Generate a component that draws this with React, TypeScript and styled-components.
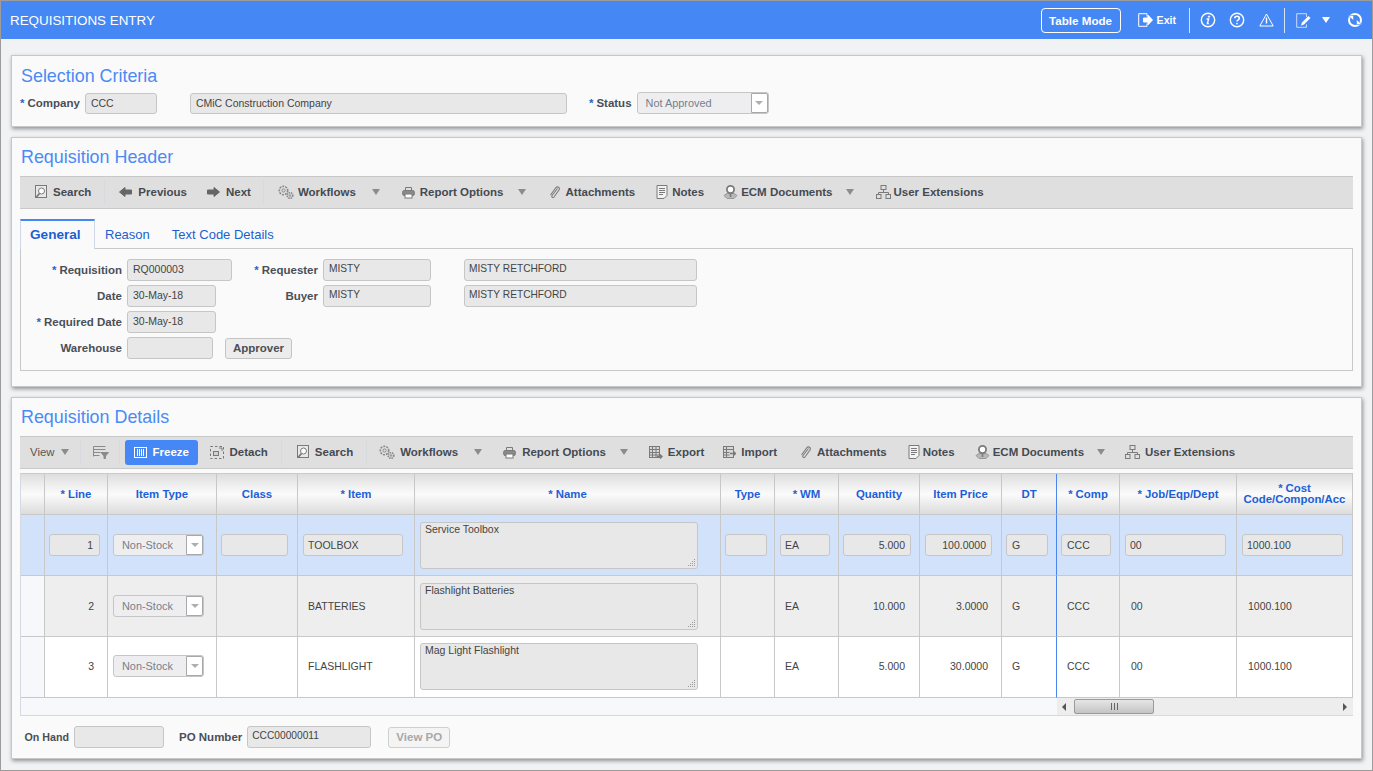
import { ReactNode } from 'react';
import styled, { createGlobalStyle } from 'styled-components';

const GlobalStyle = createGlobalStyle`
  html, body {
    margin: 0;
    padding: 0;
    height: 100%;
    overflow: hidden;
    background: #f1f2f4;
  }
  body {
    font-family: 'Liberation Sans', Arial, sans-serif;
    font-size: 10.5px;
    color: #3a3f47;
  }
`;

const Page = styled.div`
  box-sizing: border-box;
  width: 1373px;
  height: 771px;
  border: 1px solid #9c9c9c;
  background: #f1f2f4;
  display: flex;
  flex-direction: column;
  overflow: hidden;
`;

const TopBar = styled.header`
  flex: none;
  height: 38px;
  background: #4588f5;
  color: #fff;
  display: flex;
  align-items: center;
  padding: 0 9px;
`;

const AppTitle = styled.div`
  font-size: 13.4px;
  padding-top: 1px;
  flex: 1;
`;

const TableModeButton = styled.button`
  flex: none;
  font: bold 11.6px 'Liberation Sans', Arial, sans-serif;
  color: #fff;
  background: transparent;
  border: 1px solid #fff;
  border-radius: 4px;
  width: 80px;
  height: 25px;
  padding: 0;
  margin-right: 17px;
`;

const ExitLink = styled.div`
  display: flex;
  align-items: center;
  gap: 4px;
  font-weight: bold;
  font-size: 10.6px;
  margin-right: 13px;
`;

const BarRule = styled.div<{ $ml?: number }>`
  width: 1px;
  height: 25px;
  margin-left: ${(p) => p.$ml ?? 0}px;
  background: #d5e3fb;
`;

const BarIcon = styled.span<{ $ml: number }>`
  display: flex;
  margin-left: ${(p) => p.$ml}px;
`;

const Content = styled.main`
  flex: 1;
  display: flex;
  flex-direction: column;
  gap: 10px;
  padding: 16px 10px 0;
`;

const Panel = styled.section<{ $h: number }>`
  box-sizing: border-box;
  height: ${(p) => p.$h}px;
  background: #fafafa;
  border: 1px solid #c8c8c8;
  box-shadow: 1px 2px 4px rgba(0, 0, 0, 0.4);
  padding: 0 8px;
`;

const PanelTitle = styled.h2`
  margin: 0;
  padding-left: 1px;
  font-size: 17.9px;
  font-weight: normal;
  color: #4a8af4;
  height: 20px;
  line-height: 20px;
`;

const CriteriaTitle = styled(PanelTitle)`
  margin-top: 10px;
`;

const SectionTitle = styled(PanelTitle)`
  margin-top: 9px;
  margin-bottom: 9px;
`;

const Row = styled.div<{ $mt?: number }>`
  display: flex;
  align-items: center;
  margin-top: ${(p) => p.$mt ?? 0}px;
`;

const Label = styled.label<{ $w?: number; $ml?: number; $fs?: number }>`
  flex: none;
  box-sizing: border-box;
  width: ${(p) => (p.$w ? `${p.$w}px` : 'auto')};
  margin-left: ${(p) => p.$ml ?? 0}px;
  margin-right: 5px;
  text-align: right;
  font-weight: bold;
  font-size: ${(p) => p.$fs ?? 11.5}px;
  color: #4a4f57;
  white-space: nowrap;
`;

const Star = styled.span`
  color: #2a62c8;
  margin-right: 3px;
`;

const Field = styled.div<{ $w: number; $h?: number; $ml?: number; $right?: boolean; $pl?: number; $pr?: number; $fs?: number }>`
  flex: none;
  box-sizing: border-box;
  width: ${(p) => p.$w}px;
  height: ${(p) => p.$h ?? 22}px;
  margin-left: ${(p) => p.$ml ?? 0}px;
  background: #e8e8e8;
  border: 1px solid #c6c6c6;
  border-radius: 3px;
  padding: 0 ${(p) => p.$pr ?? 5}px 1px ${(p) => p.$pl ?? 5}px;
  display: flex;
  align-items: center;
  justify-content: ${(p) => (p.$right ? 'flex-end' : 'flex-start')};
  font-size: ${(p) => p.$fs ?? 10.5}px;
  color: #444;
  white-space: nowrap;
`;

const FormField = styled(Field)`
  padding-bottom: 3px;
`;

const SelectBox = styled.div<{ $w: number; $ml?: number }>`
  flex: none;
  box-sizing: border-box;
  width: ${(p) => p.$w}px;
  height: 22px;
  margin-left: ${(p) => p.$ml ?? 0}px;
  background: #eeeef0;
  border: 1px solid #c6c6c6;
  border-radius: 3px;
  padding-left: 8px;
  position: relative;
  display: flex;
  align-items: center;
  font-size: 10.9px;
  color: #76808c;
`;

const SelectArrow = styled.span`
  position: absolute;
  top: 0;
  right: 0;
  width: 17px;
  height: 20px;
  box-sizing: border-box;
  background: #fff;
  border: 1px solid #a8a8a8;
  border-radius: 0 2px 2px 0;
  display: flex;
  align-items: center;
  justify-content: center;
  &::after {
    content: '';
    border-left: 4px solid transparent;
    border-right: 4px solid transparent;
    border-top: 4px solid #aeaeae;
  }
`;

const Toolbar = styled.div`
  height: 33px;
  box-sizing: border-box;
  background: #dfdfdf;
  border-top: 1px solid #c8c8c8;
  border-bottom: 1px solid #c8c8c8;
  padding-bottom: 1px;
  display: flex;
  align-items: center;
`;

const ToolItem = styled.div<{ $ml: number; $gap?: number; $plain?: boolean }>`
  flex: none;
  display: flex;
  align-items: center;
  gap: ${(p) => p.$gap ?? 5}px;
  margin-left: ${(p) => p.$ml}px;
  font-weight: ${(p) => (p.$plain ? 'normal' : 'bold')};
  font-size: ${(p) => (p.$plain ? 11.4 : 11.5)}px;
  color: ${(p) => (p.$plain ? '#555' : '#454a52')};
  white-space: nowrap;
`;

const FreezeButton = styled(ToolItem)`
  box-sizing: border-box;
  width: 73px;
  height: 25px;
  padding-left: 9px;
  background: #4588f5;
  border-radius: 3px;
  color: #fff;
`;

const ToolSep = styled.span<{ $ml: number }>`
  flex: none;
  width: 1px;
  height: 26px;
  margin-left: ${(p) => p.$ml}px;
  background: #d7dbe0;
`;

const Caret = styled.span<{ $ml: number }>`
  flex: none;
  margin-left: ${(p) => p.$ml}px;
  border-left: 4.5px solid transparent;
  border-right: 4.5px solid transparent;
  border-top: 6px solid #8c8c8c;
`;

const WhiteCaret = styled(Caret)`
  border-top-color: #fff;
`;

const TabStrip = styled.div`
  display: flex;
  height: 29px;
  margin-top: 10px;
  font-size: 13px;
`;

const Tab = styled.div<{ $active?: boolean; $ml?: number }>`
  box-sizing: border-box;
  display: flex;
  align-items: center;
  margin-left: ${(p) => p.$ml ?? 0}px;
  color: #1c5fd0;
  padding-top: 1px;
  ${(p) =>
    p.$active
      ? `
    width: 75px;
    padding: 0 0 2px 9px;
    font-size: 13.6px;
    font-weight: bold;
    background: #fafafa;
    border-top: 2px solid #4588f5;
    border-left: 1px solid #cfd8e6;
    border-right: 1px solid #cfd8e6;
    margin-bottom: -1px;
    position: relative;
    z-index: 1;
  `
      : ''}
`;

const TabBody = styled.div`
  box-sizing: border-box;
  height: 123px;
  border: 1px solid #c8c8c8;
  display: flex;
  padding-top: 10px;
`;

const FormColumn = styled.div<{ $w: number }>`
  flex: none;
  width: ${(p) => p.$w}px;
  display: flex;
  flex-direction: column;
  gap: 4px;
`;

const SmallButton = styled.button<{ $disabled?: boolean }>`
  flex: none;
  box-sizing: border-box;
  height: 21px;
  border: 1px solid ${(p) => (p.$disabled ? '#cfcfcf' : '#c4c4c4')};
  border-radius: 3px;
  background: ${(p) => (p.$disabled ? '#f4f4f4' : '#ececec')};
  color: ${(p) => (p.$disabled ? '#a8a8a8' : '#4a4f57')};
  font: bold 11.5px 'Liberation Sans', Arial, sans-serif;
  padding: 0;
`;

const ApproverButton = styled(SmallButton)`
  width: 67px;
  margin-left: 12px;
`;

const ViewPoButton = styled(SmallButton)`
  width: 62px;
  margin-left: 17px;
`;

const GridWrap = styled.div`
  margin-top: 4px;
  width: 1333px;
`;

const Grid = styled.table`
  border-collapse: separate;
  border-spacing: 0;
  table-layout: fixed;
  width: 1333px;
  border-top: 1px solid #cacaca;
  border-left: 1px solid #d4dae4;
`;

const Th = styled.th<{ $blue?: boolean }>`
  box-sizing: border-box;
  height: 41px;
  padding: 0 2px;
  background: linear-gradient(#dedede 0%, #fbfbfb 50%, #dcdcdc 100%);
  color: #1c5fd8;
  font-weight: bold;
  font-size: 11.4px;
  line-height: 11px;
  border-right: 1px solid ${(p) => (p.$blue ? '#4a86ee' : '#c8c8c8')};
  border-bottom: 1px solid #c8c8c8;
`;

const Td = styled.td<{ $bg: string; $blue?: boolean; $right?: boolean; $pl?: number; $pr?: number; $pb?: number }>`
  box-sizing: border-box;
  height: 61px;
  padding: 0 ${(p) => p.$pr ?? 0}px ${(p) => p.$pb ?? 0}px ${(p) => p.$pl ?? 0}px;
  background: ${(p) => p.$bg};
  border-right: 1px solid ${(p) => (p.$blue ? '#4a86ee' : '#c8c8c8')};
  border-bottom: 1px solid #c8c8c8;
  font-size: 10.5px;
  color: #444;
  text-align: ${(p) => (p.$right ? 'right' : 'left')};
  white-space: nowrap;
`;

const NameBox = styled.div`
  box-sizing: border-box;
  width: 278px;
  height: 47px;
  margin-left: 5px;
  background: #e8e8e8;
  border: 1px solid #c6c6c6;
  border-radius: 3px;
  padding: 0 4px;
  font-size: 10.5px;
  color: #444;
  line-height: 12px;
  position: relative;
`;

const Grip = styled.svg`
  position: absolute;
  right: 1px;
  bottom: 1px;
`;

const ScrollRow = styled.div`
  box-sizing: border-box;
  height: 18px;
  display: flex;
  border-bottom: 1px solid #d4dae4;
  border-left: 1px solid #d4dae4;
`;

const FrozenScroll = styled.div`
  flex: none;
  width: 1036px;
  background: #f6f8fc;
`;

const ScrollTrack = styled.div`
  flex: 1;
  background: #ededed;
  display: flex;
  align-items: center;
  justify-content: space-between;
  padding: 0 6px 0 5px;
  position: relative;
`;

const ScrollThumb = styled.div`
  position: absolute;
  left: 17px;
  top: 1px;
  width: 80px;
  height: 15px;
  box-sizing: border-box;
  border: 1px solid #9a9a9a;
  border-radius: 2px;
  background: linear-gradient(#e6e6e6, #c4c4c4);
  display: flex;
  align-items: center;
  justify-content: center;
  gap: 2px;
`;

const ThumbLine = styled.i`
  width: 1px;
  height: 7px;
  background: #666;
`;

const ScrollArrow = styled.span<{ $dir: 'left' | 'right' }>`
  border-top: 4px solid transparent;
  border-bottom: 4px solid transparent;
  ${(p) =>
    p.$dir === 'left' ? 'border-right: 4px solid #555;' : 'border-left: 4px solid #555;'}
`;

const FooterRow = styled(Row)`
  margin-top: 10px;
`;

// toolbar and title bar drawings

function Ico({ w = 14, h = 14, color = '#7a7a7a', fill = 'none', children }: { w?: number; h?: number; color?: string; fill?: string; children: ReactNode }) {
  return (
    <svg width={w} height={h} viewBox={`0 0 ${w} ${h}`} fill={fill} stroke={color} strokeWidth="1" style={{ flex: 'none', display: 'block' }}>
      {children}
    </svg>
  );
}

const SearchIcon = () => (
  <Ico>
    <rect x="1.5" y="0.5" width="11" height="12" fill="#e8e8e8" />
    <circle cx="7.5" cy="6" r="3" fill="#fff" />
    <path d="M5.5 8.5 2 12.5" strokeWidth="1.8" />
  </Ico>
);

const ArrowLeftIcon = () => (
  <Ico w={13} h={12} color="#666" fill="#666">
    <path d="M0.5 6 6 1.5V4h6.5v4H6v2.5z" />
  </Ico>
);

const ArrowRightIcon = () => (
  <Ico w={13} h={12} color="#666" fill="#666">
    <path d="M12.5 6 7 1.5V4H0.5v4H7v2.5z" />
  </Ico>
);

const GearsIcon = () => (
  <Ico w={16} h={14} color="#8a8a8a">
    <circle cx="5.5" cy="5.5" r="4.2" strokeWidth="1.6" strokeDasharray="2 1" />
    <circle cx="5.5" cy="5.5" r="1.6" />
    <circle cx="12" cy="10.5" r="2.8" strokeWidth="1.6" strokeDasharray="1.5 0.8" />
    <circle cx="12" cy="10.5" r="0.8" />
  </Ico>
);

const PrintIcon = () => (
  <Ico w={13} h={13}>
    <path d="M3.5 4.5v-3h6v3" />
    <rect x="0.7" y="4.5" width="11.6" height="5" rx="1.5" fill="#8a8a8a" />
    <rect x="3" y="8" width="7" height="4" fill="#fff" />
  </Ico>
);

const ClipIcon = () => (
  <Ico w={13} h={14}>
    <path d="M9.5 3.5 4 10.5c-1 1.3 1 2.8 2 1.5l5-7c1.6-2.2-1.6-4.4-3.2-2.2L2.5 10" strokeWidth="1.1" />
  </Ico>
);

const NotesIcon = () => (
  <Ico w={12} h={14}>
    <path d="M1 .5h10v10l-3 3H1z" fill="#f2f2f2" />
    <path d="M3 3.5h6M3 5.5h6M3 7.5h6M3 9.5h4" />
  </Ico>
);

const EcmIcon = () => (
  <Ico w={15} h={14}>
    <path d="M1 10.5 4 8.5h7l3 2-3 3H4z" fill="#b8b8b8" stroke="#999" />
    <circle cx="7.5" cy="4.5" r="3.6" fill="#fff" strokeWidth="1.8" />
    <path d="M7.5 8v4" strokeWidth="1.6" />
  </Ico>
);

const TreeIcon = () => (
  <Ico w={15} h={14}>
    <rect x="5" y="0.5" width="5" height="4" />
    <path d="M7.5 4.5v3M2.5 9.5v-2h10v2" />
    <rect x="0.5" y="9.5" width="4.5" height="4" />
    <rect x="10" y="9.5" width="4.5" height="4" />
  </Ico>
);

const FilterIcon = () => (
  <Ico w={16} h={13} color="#8a8a8a">
    <path d="M.5 .5h12M.5 3.5h12M.5 6.5h7M.5 9.5h6M.5 .5v10" />
    <path d="M8 6.5h7.5L12.5 10v2.5l-1.5 .3V10z" fill="#8a8a8a" />
  </Ico>
);

const FreezeIcon = () => (
  <Ico w={13} h={11} color="#fff">
    <rect x="0.5" y="0.5" width="12" height="10" />
    <path d="M3.5 2v7M5.5 2v7M7.5 2v7M9.5 2v7" />
  </Ico>
);

const DetachIcon = () => (
  <Ico w={14} h={13}>
    <rect x="0.5" y="0.5" width="13" height="12" strokeDasharray="2.5 2" />
    <rect x="3.5" y="5.5" width="5" height="4" fill="#d0d0d0" />
    <path d="M9 2h3v3" />
  </Ico>
);

const ExportIcon = () => (
  <Ico w={14} h={13}>
    <rect x="0.5" y="0.5" width="10" height="11" fill="#d8d8d8" />
    <path d="M0.5 3.5h10M3.5 .5v11M7 .5v11M.5 6.5h10M.5 9h10" />
    <path d="M8 10.5h5M11 8.5l2 2-2 2" strokeWidth="1.4" />
  </Ico>
);

const ImportIcon = () => (
  <Ico w={13} h={13}>
    <rect x="0.5" y="0.5" width="10" height="11" fill="#d8d8d8" />
    <path d="M0.5 3.5h10M3.5 .5v11M.5 6.5h6M.5 9h6" />
    <path d="M7 7.5h5.5M10.5 5.5l2 2-2 2" strokeWidth="1.4" />
  </Ico>
);

const ExitIcon = () => (
  <Ico w={15} h={14} color="#fff">
    <path d="M9 3.5V.7H.7v12.6H9v-2.8" />
    <path d="M5.5 5H10V2.2L14.5 7 10 11.8V9H5.5z" fill="#fff" />
  </Ico>
);

const InfoIcon = () => (
  <Ico w={16} h={16} color="#fff">
    <circle cx="8" cy="8" r="6.7" strokeWidth="1.4" />
    <path d="M6.6 7h2L7.4 11.6h1.5" strokeWidth="1.4" />
    <circle cx="9" cy="4.6" r="0.7" fill="#fff" />
  </Ico>
);

const HelpIcon = () => (
  <Ico w={16} h={16} color="#fff">
    <circle cx="8" cy="8" r="6.7" strokeWidth="1.4" />
    <path d="M5.8 6.2C5.8 3.6 10.3 3.6 10.3 6.2 10.3 7.9 8 7.7 8 9.6" strokeWidth="1.6" />
    <circle cx="8" cy="11.6" r="0.9" fill="#fff" stroke="none" />
  </Ico>
);

const WarnIcon = () => (
  <Ico w={15} h={14} color="#fff">
    <path d="M7.5 1 14.2 13H.8z" />
    <path d="M7.5 4.5V10.5" strokeWidth="1.4" />
  </Ico>
);

const EditIcon = () => (
  <Ico w={15} h={15} color="#fff">
    <path d="M10.5 4V.7H.7v13.6h9.8v-3" stroke="#c7dafc" />
    <path d="M5 12.5 6 9.5 12.5 3l2 2L8 11.5z" fill="#fff" stroke="none" />
  </Ico>
);

const RefreshIcon = () => (
  <Ico w={16} h={16} color="#fff">
    <circle cx="8" cy="8" r="6" strokeWidth="2" />
    <path d="M1 3.5h5.5v5zM15 12.5H9.5v-5z" fill="#fff" stroke="#4588f5" strokeWidth="0.6" />
  </Ico>
);

const Req = () => <Star>*</Star>;

function GripMark() {
  return (
    <Grip width="9" height="9" viewBox="0 0 9 9" fill="#9a9a9a">
      <rect x="7" y="1" width="1" height="1" />
      <rect x="5" y="3" width="1" height="1" />
      <rect x="7" y="3" width="1" height="1" />
      <rect x="3" y="5" width="1" height="1" />
      <rect x="5" y="5" width="1" height="1" />
      <rect x="7" y="5" width="1" height="1" />
      <rect x="1" y="7" width="1" height="1" />
      <rect x="3" y="7" width="1" height="1" />
      <rect x="5" y="7" width="1" height="1" />
      <rect x="7" y="7" width="1" height="1" />
    </Grip>
  );
}

const colWidths = [24, 63, 109, 81, 117, 306, 54, 64, 81, 82, 55, 63, 117, 116];

const headers: { text: ReactNode; blue?: boolean }[] = [
  { text: '' },
  { text: <><Req />Line</> },
  { text: 'Item Type' },
  { text: 'Class' },
  { text: <><Req />Item</> },
  { text: <><Req />Name</> },
  { text: 'Type' },
  { text: <><Req />WM</> },
  { text: 'Quantity' },
  { text: 'Item Price' },
  { text: 'DT', blue: true },
  { text: <><Req />Comp</> },
  { text: <><Req />Job/Eqp/Dept</> },
  { text: <><Req />Cost<br />Code/Compon/Acc</> },
];

const rows = [
  { line: '2', item: 'BATTERIES', name: 'Flashlight Batteries', qty: '10.000', price: '3.0000', bg: '#eeeeee', pb: 0 },
  { line: '3', item: 'FLASHLIGHT', name: 'Mag Light Flashlight', qty: '5.000', price: '30.0000', bg: '#ffffff', pb: 2 },
];

const selBg = '#d2e2fb';
const gutterBg = '#f6f8fc';

export default function App() {
  return (
    <Page>
      <GlobalStyle />
      <TopBar>
        <AppTitle>REQUISITIONS ENTRY</AppTitle>
        <TableModeButton>Table Mode</TableModeButton>
        <ExitLink><ExitIcon />Exit</ExitLink>
        <BarRule />
        <BarIcon $ml={10}><InfoIcon /></BarIcon>
        <BarIcon $ml={13}><HelpIcon /></BarIcon>
        <BarIcon $ml={14}><WarnIcon /></BarIcon>
        <BarRule $ml={10} />
        <BarIcon $ml={11}><EditIcon /></BarIcon>
        <WhiteCaret $ml={11} />
        <BarIcon $ml={17}><RefreshIcon /></BarIcon>
      </TopBar>

      <Content>
        <Panel $h={72}>
          <CriteriaTitle>Selection Criteria</CriteriaTitle>
          <Row $mt={6}>
            <Label><Req />Company</Label>
            <Field $w={72} $h={21}>CCC</Field>
            <Field $w={377} $h={21} $ml={33}>CMiC Construction Company</Field>
            <Label $ml={22}><Req />Status</Label>
            <SelectBox $w={132}>Not Approved<SelectArrow /></SelectBox>
          </Row>
        </Panel>

        <Panel $h={250}>
          <SectionTitle>Requisition Header</SectionTitle>
          <Toolbar>
            <ToolItem $ml={14}><SearchIcon />Search</ToolItem>
            <ToolSep $ml={13} />
            <ToolItem $ml={14} $gap={6}><ArrowLeftIcon />Previous</ToolItem>
            <ToolItem $ml={20} $gap={6}><ArrowRightIcon />Next</ToolItem>
            <ToolSep $ml={12} />
            <ToolItem $ml={14} $gap={4}><GearsIcon />Workflows</ToolItem>
            <Caret $ml={16} />
            <ToolItem $ml={22} $gap={5}><PrintIcon />Report Options</ToolItem>
            <Caret $ml={14} />
            <ToolItem $ml={22} $gap={5}><ClipIcon />Attachments</ToolItem>
            <ToolItem $ml={21} $gap={4}><NotesIcon />Notes</ToolItem>
            <ToolItem $ml={19} $gap={3}><EcmIcon />ECM Documents</ToolItem>
            <Caret $ml={13} />
            <ToolItem $ml={22} $gap={3}><TreeIcon />User Extensions</ToolItem>
          </Toolbar>
          <TabStrip>
            <Tab $active>General</Tab>
            <Tab $ml={10}>Reason</Tab>
            <Tab $ml={22}>Text Code Details</Tab>
          </TabStrip>
          <TabBody>
            <FormColumn $w={217}>
              <Row><Label $w={101}><Req />Requisition</Label><FormField $w={105}>RQ000003</FormField></Row>
              <Row><Label $w={101}>Date</Label><FormField $w={89}>30-May-18</FormField></Row>
              <Row><Label $w={101}><Req />Required Date</Label><FormField $w={89}>30-May-18</FormField></Row>
              <Row><Label $w={101}>Warehouse</Label><Field $w={86} /><ApproverButton>Approver</ApproverButton></Row>
            </FormColumn>
            <FormColumn $w={470}>
              <Row><Label $w={80}><Req />Requester</Label><FormField $w={108} $fs={10.2}>MISTY</FormField><FormField $w={233} $ml={33} $pl={4} $fs={10.2}>MISTY RETCHFORD</FormField></Row>
              <Row><Label $w={80}>Buyer</Label><FormField $w={108} $fs={10.2}>MISTY</FormField><FormField $w={233} $ml={33} $pl={4} $fs={10.2}>MISTY RETCHFORD</FormField></Row>
            </FormColumn>
          </TabBody>
        </Panel>

        <Panel $h={362}>
          <SectionTitle>Requisition Details</SectionTitle>
          <Toolbar>
            <ToolItem $ml={10} $plain>View</ToolItem>
            <Caret $ml={7} />
            <ToolSep $ml={11} />
            <ToolItem $ml={12}><FilterIcon /></ToolItem>
            <ToolSep $ml={10} />
            <FreezeButton $ml={5}><FreezeIcon />Freeze</FreezeButton>
            <ToolItem $ml={12}><DetachIcon />Detach</ToolItem>
            <ToolSep $ml={13} />
            <ToolItem $ml={14}><SearchIcon />Search</ToolItem>
            <ToolSep $ml={13} />
            <ToolItem $ml={12}><GearsIcon />Workflows</ToolItem>
            <Caret $ml={16} />
            <ToolItem $ml={21} $gap={6}><PrintIcon />Report Options</ToolItem>
            <Caret $ml={14} />
            <ToolItem $ml={21}><ExportIcon />Export</ToolItem>
            <ToolItem $ml={19}><ImportIcon />Import</ToolItem>
            <ToolItem $ml={22} $gap={5}><ClipIcon />Attachments</ToolItem>
            <ToolItem $ml={21} $gap={3}><NotesIcon />Notes</ToolItem>
            <ToolItem $ml={20} $gap={3}><EcmIcon />ECM Documents</ToolItem>
            <Caret $ml={13} />
            <ToolItem $ml={20} $gap={5}><TreeIcon />User Extensions</ToolItem>
          </Toolbar>
          <GridWrap>
            <Grid>
              <colgroup>
                {colWidths.map((w, i) => <col key={i} style={{ width: w }} />)}
              </colgroup>
              <thead>
                <tr>
                  {headers.map((h, i) => <Th key={i} $blue={h.blue}>{h.text}</Th>)}
                </tr>
              </thead>
              <tbody>
                <tr>
                  <Td $bg={selBg} />
                  <Td $bg={selBg} $pl={4}><Field $w={51} $right $pr={6}>1</Field></Td>
                  <Td $bg={selBg} $pl={5}><SelectBox $w={91}>Non-Stock<SelectArrow /></SelectBox></Td>
                  <Td $bg={selBg} $pl={4}><Field $w={67} /></Td>
                  <Td $bg={selBg} $pl={5}><Field $w={100} $pl={4}>TOOLBOX</Field></Td>
                  <Td $bg={selBg}><NameBox>Service Toolbox<GripMark /></NameBox></Td>
                  <Td $bg={selBg} $pl={4}><Field $w={42} /></Td>
                  <Td $bg={selBg} $pl={5}><Field $w={50} $pl={4}>EA</Field></Td>
                  <Td $bg={selBg} $pl={4}><Field $w={68} $right>5.000</Field></Td>
                  <Td $bg={selBg} $pl={5}><Field $w={67} $right>100.0000</Field></Td>
                  <Td $bg={selBg} $pl={4} $blue><Field $w={42}>G</Field></Td>
                  <Td $bg={selBg} $pl={4}><Field $w={50}>CCC</Field></Td>
                  <Td $bg={selBg} $pl={5}><Field $w={101} $pl={4}>00</Field></Td>
                  <Td $bg={selBg} $pl={5}><Field $w={101} $pl={4}>1000.100</Field></Td>
                </tr>
                {rows.map((r) => (
                  <tr key={r.line}>
                    <Td $bg={gutterBg} />
                    <Td $bg={r.bg} $pb={r.pb} $right $pr={13}>{r.line}</Td>
                    <Td $bg={r.bg} $pb={r.pb} $pl={5}><SelectBox $w={91}>Non-Stock<SelectArrow /></SelectBox></Td>
                    <Td $bg={r.bg} />
                    <Td $bg={r.bg} $pb={r.pb} $pl={10}>{r.item}</Td>
                    <Td $bg={r.bg} $pb={r.pb}><NameBox>{r.name}<GripMark /></NameBox></Td>
                    <Td $bg={r.bg} />
                    <Td $bg={r.bg} $pb={r.pb} $pl={10}>EA</Td>
                    <Td $bg={r.bg} $pb={r.pb} $right $pr={14}>{r.qty}</Td>
                    <Td $bg={r.bg} $pb={r.pb} $right $pr={13}>{r.price}</Td>
                    <Td $bg={r.bg} $pb={r.pb} $pl={10} $blue>G</Td>
                    <Td $bg={r.bg} $pb={r.pb} $pl={10}>CCC</Td>
                    <Td $bg={r.bg} $pb={r.pb} $pl={11}>00</Td>
                    <Td $bg={r.bg} $pb={r.pb} $pl={11}>1000.100</Td>
                  </tr>
                ))}
              </tbody>
            </Grid>
            <ScrollRow>
              <FrozenScroll />
              <ScrollTrack>
                <ScrollArrow $dir="left" />
                <ScrollThumb><ThumbLine /><ThumbLine /><ThumbLine /></ScrollThumb>
                <ScrollArrow $dir="right" />
              </ScrollTrack>
            </ScrollRow>
          </GridWrap>
          <FooterRow>
            <Label $ml={4} $w={45} $fs={10.7}>On Hand</Label>
            <Field $w={90} />
            <Label $ml={15}>PO Number</Label>
            <FormField $w={124} $pl={4} $fs={10.2}>CCC00000011</FormField>
            <ViewPoButton $disabled>View PO</ViewPoButton>
          </FooterRow>
        </Panel>
      </Content>
    </Page>
  );
}
